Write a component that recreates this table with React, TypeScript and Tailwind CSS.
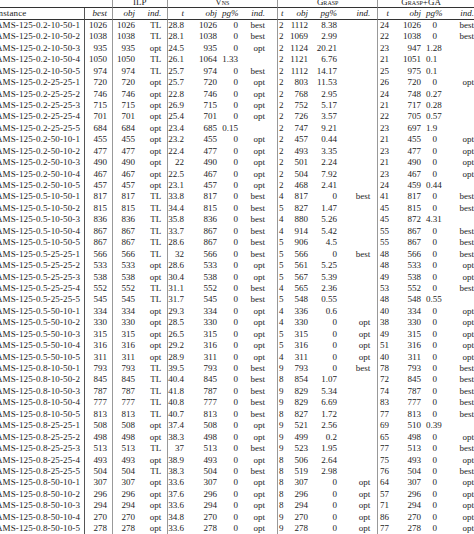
const rows: string[][] = [
  ['0.2-10-50-1', '1026', '1026', 'TL', '28.8', '1026', '0', 'best', '2', '1112', '8.38', '', '24', '1026', '0', 'best'],
  ['0.2-10-50-2', '1038', '1038', 'TL', '28.1', '1038', '0', 'best', '2', '1069', '2.99', '', '22', '1038', '0', 'best'],
  ['0.2-10-50-3', '935', '935', 'opt', '24.5', '935', '0', 'opt', '2', '1124', '20.21', '', '23', '947', '1.28', ''],
  ['0.2-10-50-4', '1050', '1050', 'TL', '26.1', '1064', '1.33', '', '2', '1121', '6.76', '', '21', '1051', '0.1', ''],
  ['0.2-10-50-5', '974', '974', 'TL', '25.7', '974', '0', 'best', '2', '1112', '14.17', '', '25', '975', '0.1', ''],
  ['0.2-25-25-1', '720', '720', 'opt', '25.7', '720', '0', 'opt', '2', '803', '11.53', '', '26', '720', '0', 'opt'],
  ['0.2-25-25-2', '746', '746', 'opt', '22.8', '746', '0', 'opt', '2', '768', '2.95', '', '24', '748', '0.27', ''],
  ['0.2-25-25-3', '715', '715', 'opt', '26.9', '715', '0', 'opt', '2', '752', '5.17', '', '21', '717', '0.28', ''],
  ['0.2-25-25-4', '701', '701', 'opt', '25.4', '701', '0', 'opt', '2', '726', '3.57', '', '22', '705', '0.57', ''],
  ['0.2-25-25-5', '684', '684', 'opt', '23.4', '685', '0.15', '', '2', '747', '9.21', '', '23', '697', '1.9', ''],
  ['0.2-50-10-1', '455', '455', 'opt', '23.2', '455', '0', 'opt', '2', '457', '0.44', '', '21', '455', '0', 'opt'],
  ['0.2-50-10-2', '477', '477', 'opt', '22.4', '477', '0', 'opt', '2', '493', '3.35', '', '23', '477', '0', 'opt'],
  ['0.2-50-10-3', '490', '490', 'opt', '22', '490', '0', 'opt', '2', '501', '2.24', '', '21', '490', '0', 'opt'],
  ['0.2-50-10-4', '467', '467', 'opt', '22.5', '467', '0', 'opt', '2', '504', '7.92', '', '23', '467', '0', 'opt'],
  ['0.2-50-10-5', '457', '457', 'opt', '23.1', '457', '0', 'opt', '2', '468', '2.41', '', '24', '459', '0.44', ''],
  ['0.5-10-50-1', '817', '817', 'TL', '33.8', '817', '0', 'best', '4', '817', '0', 'best', '41', '817', '0', 'best'],
  ['0.5-10-50-2', '815', '815', 'TL', '34.4', '815', '0', 'best', '5', '827', '1.47', '', '45', '815', '0', 'best'],
  ['0.5-10-50-3', '836', '836', 'TL', '35.8', '836', '0', 'best', '4', '880', '5.26', '', '45', '872', '4.31', ''],
  ['0.5-10-50-4', '867', '867', 'TL', '33.7', '867', '0', 'best', '4', '914', '5.42', '', '55', '867', '0', 'best'],
  ['0.5-10-50-5', '867', '867', 'TL', '28.6', '867', '0', 'best', '5', '906', '4.5', '', '55', '867', '0', 'best'],
  ['0.5-25-25-1', '566', '566', 'TL', '32', '566', '0', 'best', '5', '566', '0', 'best', '48', '566', '0', 'best'],
  ['0.5-25-25-2', '533', '533', 'opt', '28.6', '533', '0', 'opt', '5', '561', '5.25', '', '48', '533', '0', 'opt'],
  ['0.5-25-25-3', '538', '538', 'opt', '30.4', '538', '0', 'opt', '5', '567', '5.39', '', '49', '538', '0', 'opt'],
  ['0.5-25-25-4', '552', '552', 'TL', '31.1', '552', '0', 'best', '4', '565', '2.36', '', '53', '552', '0', 'best'],
  ['0.5-25-25-5', '545', '545', 'TL', '31.7', '545', '0', 'best', '5', '548', '0.55', '', '48', '548', '0.55', ''],
  ['0.5-50-10-1', '334', '334', 'opt', '29.3', '334', '0', 'opt', '4', '336', '0.6', '', '40', '334', '0', 'opt'],
  ['0.5-50-10-2', '330', '330', 'opt', '28.5', '330', '0', 'opt', '4', '330', '0', 'opt', '38', '330', '0', 'opt'],
  ['0.5-50-10-3', '315', '315', 'opt', '26.5', '315', '0', 'opt', '5', '315', '0', 'opt', '49', '315', '0', 'opt'],
  ['0.5-50-10-4', '316', '316', 'opt', '29.2', '316', '0', 'opt', '5', '316', '0', 'opt', '51', '316', '0', 'opt'],
  ['0.5-50-10-5', '311', '311', 'opt', '28.9', '311', '0', 'opt', '4', '311', '0', 'opt', '40', '311', '0', 'opt'],
  ['0.8-10-50-1', '793', '793', 'TL', '39.5', '793', '0', 'best', '9', '793', '0', 'best', '78', '793', '0', 'best'],
  ['0.8-10-50-2', '845', '845', 'TL', '40.4', '845', '0', 'best', '8', '854', '1.07', '', '72', '845', '0', 'best'],
  ['0.8-10-50-3', '787', '787', 'TL', '41.8', '787', '0', 'best', '9', '829', '5.34', '', '74', '787', '0', 'best'],
  ['0.8-10-50-4', '777', '777', 'TL', '40.8', '777', '0', 'best', '9', '829', '6.69', '', '83', '777', '0', 'best'],
  ['0.8-10-50-5', '813', '813', 'TL', '40.7', '813', '0', 'best', '8', '827', '1.72', '', '77', '813', '0', 'best'],
  ['0.8-25-25-1', '508', '508', 'opt', '37.4', '508', '0', 'opt', '9', '521', '2.56', '', '69', '510', '0.39', ''],
  ['0.8-25-25-2', '498', '498', 'opt', '38.3', '498', '0', 'opt', '9', '499', '0.2', '', '65', '498', '0', 'opt'],
  ['0.8-25-25-3', '513', '513', 'TL', '37', '513', '0', 'best', '9', '523', '1.95', '', '77', '513', '0', 'best'],
  ['0.8-25-25-4', '493', '493', 'opt', '38.9', '493', '0', 'opt', '8', '506', '2.64', '', '75', '493', '0', 'opt'],
  ['0.8-25-25-5', '504', '504', 'TL', '38.3', '504', '0', 'best', '8', '519', '2.98', '', '76', '504', '0', 'best'],
  ['0.8-50-10-1', '307', '307', 'opt', '33.6', '307', '0', 'opt', '8', '307', '0', 'opt', '64', '307', '0', 'opt'],
  ['0.8-50-10-2', '296', '296', 'opt', '37.6', '296', '0', 'opt', '8', '296', '0', 'opt', '57', '296', '0', 'opt'],
  ['0.8-50-10-3', '294', '294', 'opt', '33.6', '294', '0', 'opt', '8', '294', '0', 'opt', '71', '294', '0', 'opt'],
  ['0.8-50-10-4', '270', '270', 'opt', '34.8', '270', '0', 'opt', '9', '270', '0', 'opt', '86', '270', '0', 'opt'],
  ['0.8-50-10-5', '278', '278', 'opt', '33.6', '278', '0', 'opt', '9', '278', '0', 'opt', '77', '278', '0', 'opt'],
]

// per-column cell classes (index matches row arrays)
const colCls = [
  'text-left pl-0 tracking-[0.12px]',
  'text-right pr-[5px] border-l border-[#555]',
  'text-right pr-[5px] border-l-[1.5px] border-[#999]',
  'text-right pr-[5.5px]',
  'text-right pr-[5px] border-l-[1.5px] border-[#999]',
  'text-right pr-[5px]',
  'text-right pr-[5px]',
  'text-right pr-[12px]',
  'text-right pr-[4.5px] border-l-[1.5px] border-[#999]',
  'text-right pr-[5px]',
  'text-right pr-[5px]',
  'text-right pr-[7px]',
  'text-right pr-[5px] border-l-[1.5px] border-[#999]',
  'text-right pr-[5px]',
  'text-right pr-[5px]',
  'text-right pr-[6px]',
]

const heads = ['instance', 'best', 'obj', 'ind.', 't', 'obj', 'pg%', 'ind.', 't', 'obj', 'pg%', 'ind.', 't', 'obj', 'pg%', 'ind.']

const cell = 'h-[11.45px] leading-[11.45px] whitespace-nowrap'

export default function App() {
  return (
    <div className="w-[474px] h-[534px] overflow-hidden bg-white text-[#1c1c1c] font-[Liberation_Serif] text-[9px]">
      <div className="-ml-[4px] -mt-[3px] w-[484px] grid grid-cols-[87.5px_28.5px_28px_26.7px_22.3px_33px_21px_34px_11px_25px_29px_35.3px_16.7px_32px_16px_38px]">
        <div className={`${cell} col-span-2 border-b border-[#333]`} />
        <div className={`${cell} col-span-2 text-center border-l-[1.5px] border-b border-b-[#333] border-[#999]`}>ILP</div>
        <div className={`${cell} col-span-4 text-center border-l-[1.5px] border-b border-b-[#333] border-[#999] [font-variant-caps:small-caps]`}>Vns</div>
        <div className={`${cell} col-span-4 text-center border-l-[1.5px] border-b border-b-[#333] border-[#999] [font-variant-caps:small-caps]`}>Grasp</div>
        <div className={`${cell} col-span-4 text-center pr-[16px] border-l-[1.5px] border-b border-b-[#333] border-[#999] [font-variant-caps:small-caps]`}>Grasp+GA</div>

        {heads.map((h, i) => (
          <div key={'h' + i} className={`${cell} ${colCls[i]} border-b border-b-[#333] ${i > 0 ? 'italic' : ''}`}>{h}</div>
        ))}

        {rows.map((r) =>
          r.map((v, i) => (
            <div key={r[0] + i} className={`${cell} ${colCls[i]}`}>
              {i === 0 ? `AMS-125-${v}` : v}
            </div>
          ))
        )}
      </div>
    </div>
  )
}
